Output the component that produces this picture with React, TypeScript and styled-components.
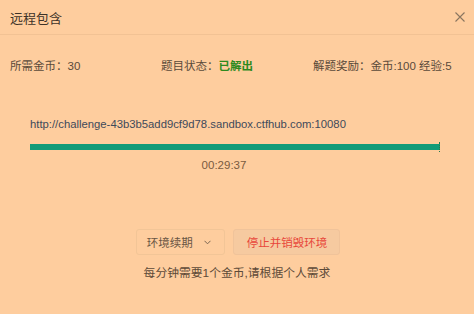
import styled, { createGlobalStyle } from "styled-components";

const GlobalStyle = createGlobalStyle`
  html, body {
    margin: 0;
    padding: 0;
    background: #fecd9e;
  }
  body {
    font-family: "Liberation Sans", "Noto Sans CJK SC", sans-serif;
  }
`;

const Dialog = styled.div`
  width: 474px;
  height: 314px;
  background: #fecd9e;
  color: #5a4a3a;
  font-size: 11.5px;
  display: flex;
  flex-direction: column;
`;

const Header = styled.div`
  height: 35px;
  padding: 0 8px 0 10px;
  display: flex;
  align-items: center;
  justify-content: space-between;
  border-bottom: 1px solid #f2c294;
  box-sizing: border-box;
`;

const Title = styled.div`
  font-size: 13px;
  color: #3d3228;
`;

const Close = styled.span`
  display: flex;
  cursor: pointer;
`;

const Body = styled.div`
  display: flex;
  flex-direction: column;
  padding: 0 10px;
`;

const InfoRow = styled.div`
  display: grid;
  grid-template-columns: 151px 152px 1fr;
  margin-top: 22px;
  line-height: 18px;
`;

const Solved = styled.span`
  color: #2d8a1e;
  font-weight: bold;
`;

const Url = styled.div`
  margin-top: 40px;
  padding-left: 20px;
  color: #3f4a5a;
  font-size: 11.3px;
  line-height: 18px;
`;

const BarRow = styled.div`
  margin: 11px 0 0 20px;
  width: 412px;
  height: 6px;
  display: flex;
  align-items: center;
`;

const Bar = styled.div`
  flex: 1;
  height: 6px;
  background: #139b78;
`;

const Cap = styled.div`
  width: 2px;
  height: 10px;
  margin-left: -1px;
  border-left: 1px dotted #237a4d;
`;

const Time = styled.div`
  margin-top: 7px;
  padding-right: 26px;
  text-align: center;
  color: #7a5b40;
  line-height: 16px;
`;

const Actions = styled.div`
  margin-top: 56px;
  display: flex;
  justify-content: center;
  gap: 8px;
  padding-left: 2px;
`;

const Button = styled.div<{ $danger?: boolean }>`
  height: 26px;
  box-sizing: border-box;
  padding: ${(p) => (p.$danger ? "0 12px 0 13px" : "0 13px 0 10px")};
  display: flex;
  align-items: center;
  gap: 11px;
  border: 1px solid ${(p) => (p.$danger ? "#f0c39a" : "#f2c597")};
  border-radius: 3px;
  background: ${(p) => (p.$danger ? "#f6caa0" : "#fecd9e")};
  color: ${(p) => (p.$danger ? "#e8463a" : "#6a5644")};
  font-size: 11.5px;
`;

const Note = styled.div`
  margin-top: 9px;
  text-align: center;
  color: #5d4a38;
  font-size: 11.8px;
  line-height: 18px;
`;

export default function App() {
  return (
    <>
      <GlobalStyle />
      <Dialog>
        <Header>
          <Title>远程包含</Title>
          <Close>
            <svg width="12" height="12" viewBox="0 0 12 12">
              <path d="M1.5 1.5l9 9M10.5 1.5l-9 9" stroke="#8a7560" strokeWidth="1.1" />
            </svg>
          </Close>
        </Header>
        <Body>
          <InfoRow>
            <span>所需金币：30</span>
            <span>
              题目状态：<Solved>已解出</Solved>
            </span>
            <span>解题奖励：金币:100 经验:5</span>
          </InfoRow>
          <Url>http://challenge-43b3b5add9cf9d78.sandbox.ctfhub.com:10080</Url>
          <BarRow>
            <Bar />
            <Cap />
          </BarRow>
          <Time>00:29:37</Time>
          <Actions>
            <Button>
              环境续期
              <svg width="7" height="5" viewBox="0 0 7 5">
                <path d="M0.5 0.8l3 3 3-3" fill="none" stroke="#7a6652" strokeWidth="1" />
              </svg>
            </Button>
            <Button $danger>停止并销毁环境</Button>
          </Actions>
          <Note>每分钟需要1个金币,请根据个人需求</Note>
        </Body>
      </Dialog>
    </>
  );
}
